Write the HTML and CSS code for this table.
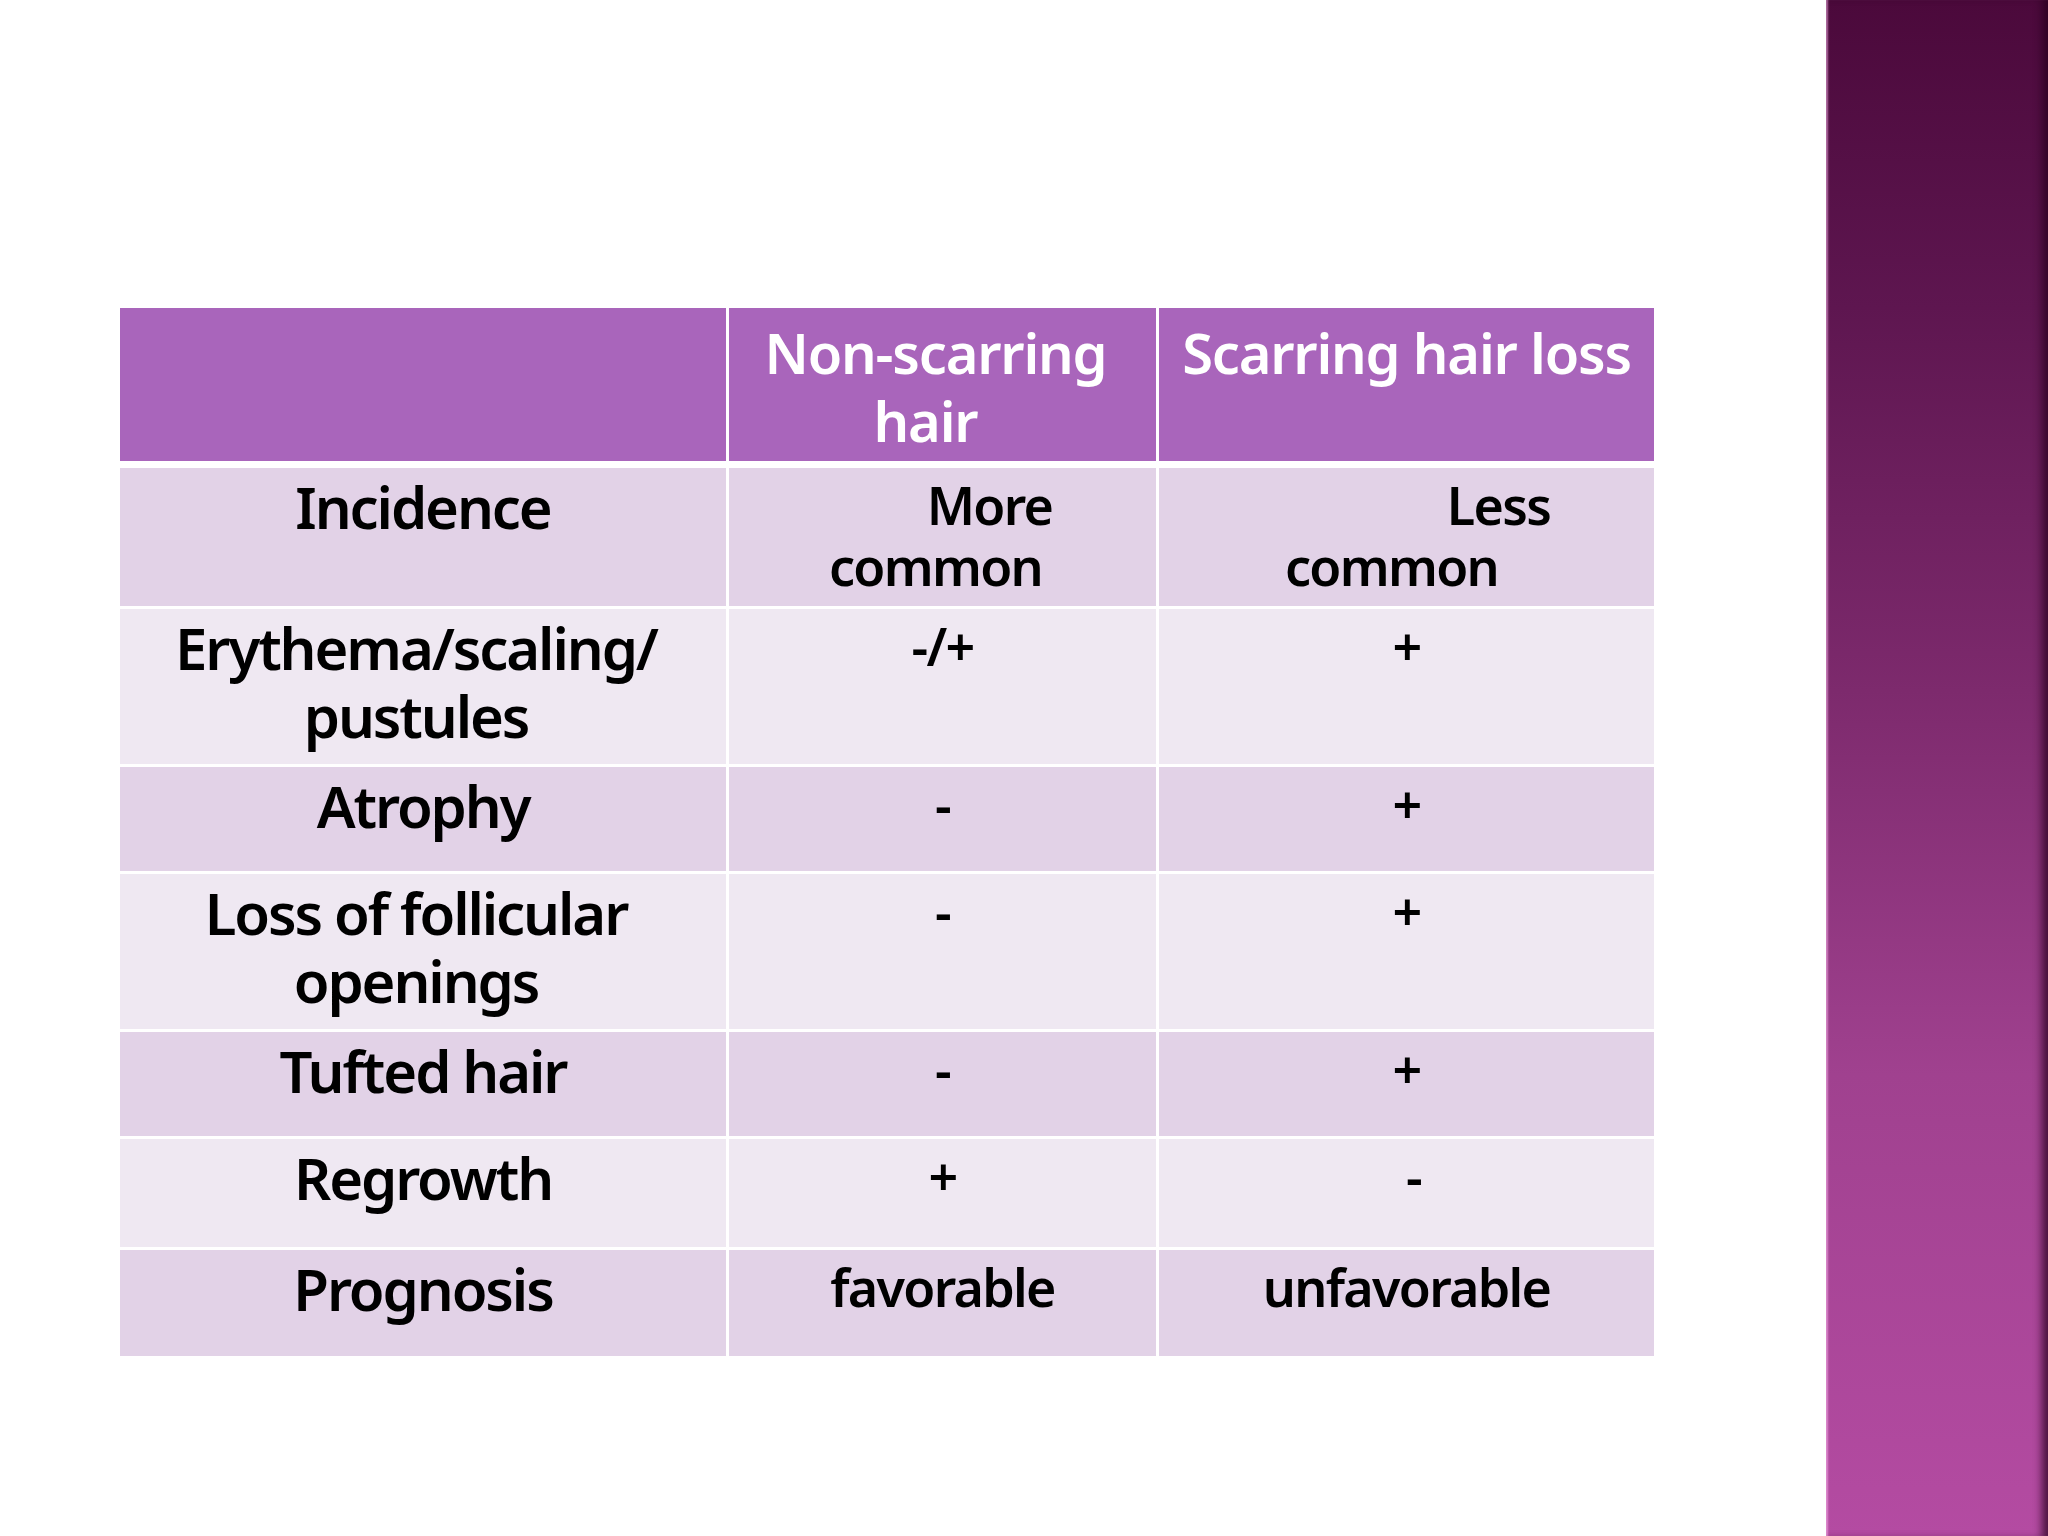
FILE: index.html
```html
<!DOCTYPE html>
<html>
<head>
<meta charset="utf-8">
<link rel="stylesheet" href="styles.css">
</head>
<body>
<div class="slide">
  <main class="content">
    <div class="grid">
      <div class="cell head"></div>
      <div class="cell head"><span class="h1">Non-scarring</span><br><span class="h2">hair</span></div>
      <div class="cell head"><span>Scarring hair loss</span></div>

      <div class="cell odd label">Incidence</div>
      <div class="cell odd val"><span class="more">More</span><br><span class="com2">common</span></div>
      <div class="cell odd val"><span class="less">Less</span><br><span class="com3">common</span></div>

      <div class="cell even label"><span class="nudge">Erythema/scaling/<br>pustules</span></div>
      <div class="cell even val">-/+</div>
      <div class="cell even val">+</div>

      <div class="cell odd label">Atrophy</div>
      <div class="cell odd val">-</div>
      <div class="cell odd val">+</div>

      <div class="cell even label"><span class="nudge">Loss of follicular<br>openings</span></div>
      <div class="cell even val">-</div>
      <div class="cell even val">+</div>

      <div class="cell odd label">Tufted hair</div>
      <div class="cell odd val">-</div>
      <div class="cell odd val">+</div>

      <div class="cell even label">Regrowth</div>
      <div class="cell even val">+</div>
      <div class="cell even val"><span class="minus">-</span></div>

      <div class="cell odd label">Prognosis</div>
      <div class="cell odd val">favorable</div>
      <div class="cell odd val">unfavorable</div>
    </div>
  </main>
  <aside class="band"></aside>
</div>
</body>
</html>
```
FILE: styles.css
```css
html, body {
  margin: 0;
  padding: 0;
  background: #ffffff;
}
.slide {
  width: 2048px;
  height: 1536px;
  display: flex;
  overflow: hidden;
}
.content {
  flex: 1;
  padding: 308px 0 0 120px;
}
.band {
  width: 222px;
  height: 1536px;
  background: linear-gradient(180deg, #4b093b 0%, #5e1650 20%, #7d2a6d 45%, #a0418f 70%, #b44ba2 100%);
  box-shadow: inset 3px 0 2px -1px rgba(255, 190, 240, 0.55), inset -10px 0 8px -4px rgba(40, 0, 30, 0.75);
}
.grid {
  display: grid;
  grid-template-columns: 606px 427px 495px;
  grid-template-rows: 157px 138px 155px 104px 155px 104px 108px 106px;
  column-gap: 3px;
  row-gap: 3px;
  font-family: "Noto Sans", "DejaVu Sans", sans-serif;
  font-weight: 600;
  color: #000000;
}
.cell {
  text-align: center;
  box-sizing: border-box;
}
.head {
  background: #a965bb;
  color: #ffffff;
  font-size: 56px;
  line-height: 68px;
  letter-spacing: -1.2px;
  padding-top: 10px;
  margin-bottom: 4px;
}
.h1 { display: inline-block; margin-right: 14px; }
.h2 { display: inline-block; margin-right: 34px; }
.odd { background: #e2d2e7; }
.even { background: #efe8f2; }
.label {
  font-size: 58px;
  line-height: 68px;
  letter-spacing: -2.1px;
  padding-top: 5px;
}
.val {
  font-size: 52px;
  line-height: 61px;
  letter-spacing: -1.7px;
  padding-top: 6px;
}
.nudge { display: inline-block; margin-right: 14px; }
.more { display: inline-block; margin-left: 94px; }
.com2 { display: inline-block; margin-right: 14px; }
.less { display: inline-block; margin-left: 184px; }
.com3 { display: inline-block; margin-right: 30px; }
.minus { display: inline-block; margin-left: 14px; }
```
